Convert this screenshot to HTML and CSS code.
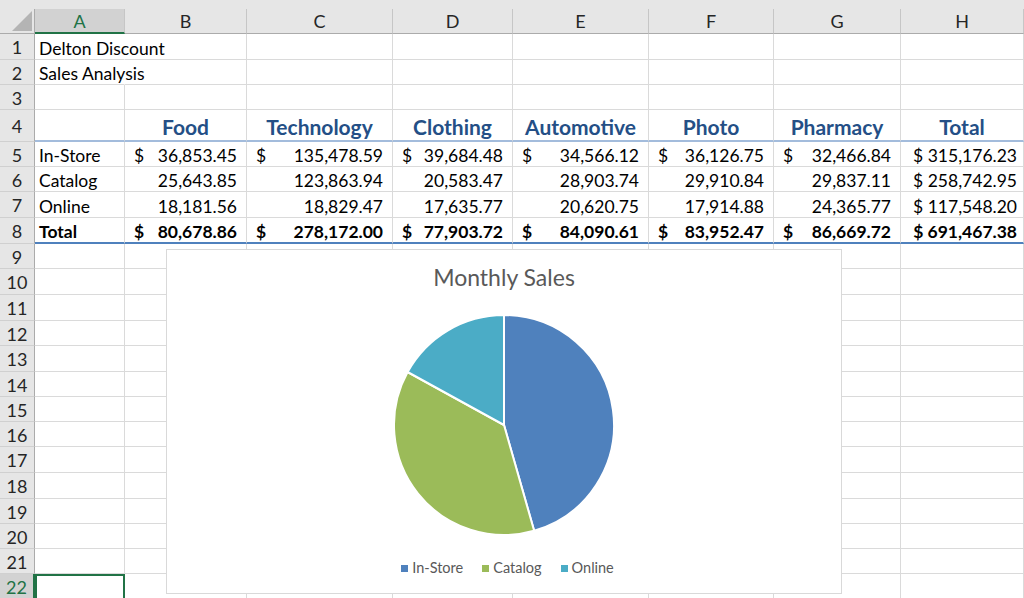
FILE: index.html
```html
<!DOCTYPE html>
<html>
<head>
<meta charset="utf-8">
<link rel="stylesheet" href="styles.css">
</head>
<body>
<div class="sheet">
  <div class="hdr">
    <div class="corner"><i></i></div>
    <div class="ch sel">A</div>
    <div class="ch">B</div>
    <div class="ch">C</div>
    <div class="ch">D</div>
    <div class="ch">E</div>
    <div class="ch">F</div>
    <div class="ch">G</div>
    <div class="ch">H</div>
  </div>

  <div class="row h26"><div class="rh">1</div><div class="c txt nob">Delton Discount</div><div class="c"></div><div class="c"></div><div class="c"></div><div class="c"></div><div class="c"></div><div class="c"></div><div class="c"></div></div>
  <div class="row h25"><div class="rh">2</div><div class="c txt nob">Sales Analysis</div><div class="c"></div><div class="c"></div><div class="c"></div><div class="c"></div><div class="c"></div><div class="c"></div><div class="c"></div></div>
  <div class="row h25"><div class="rh">3</div><div class="c"></div><div class="c"></div><div class="c"></div><div class="c"></div><div class="c"></div><div class="c"></div><div class="c"></div><div class="c"></div></div>
  <div class="row h32 r4"><div class="rh">4</div><div class="c"></div><div class="c hd">Food</div><div class="c hd">Technology</div><div class="c hd">Clothing</div><div class="c hd">Automotive</div><div class="c hd">Photo</div><div class="c hd">Pharmacy</div><div class="c hd">Total</div></div>
  <div class="row h25"><div class="rh">5</div><div class="c txt">In-Store</div><div class="c acc"><span>$</span><span>36,853.45</span></div><div class="c acc"><span>$</span><span>135,478.59</span></div><div class="c acc"><span>$</span><span>39,684.48</span></div><div class="c acc"><span>$</span><span>34,566.12</span></div><div class="c acc"><span>$</span><span>36,126.75</span></div><div class="c acc"><span>$</span><span>32,466.84</span></div><div class="c tot">$ 315,176.23</div></div>
  <div class="row h25"><div class="rh">6</div><div class="c txt">Catalog</div><div class="c num">25,643.85</div><div class="c num">123,863.94</div><div class="c num">20,583.47</div><div class="c num">28,903.74</div><div class="c num">29,910.84</div><div class="c num">29,837.11</div><div class="c tot">$ 258,742.95</div></div>
  <div class="row h26"><div class="rh">7</div><div class="c txt">Online</div><div class="c num">18,181.56</div><div class="c num">18,829.47</div><div class="c num">17,635.77</div><div class="c num">20,620.75</div><div class="c num">17,914.88</div><div class="c num">24,365.77</div><div class="c tot">$ 117,548.20</div></div>
  <div class="row h26 r8"><div class="rh">8</div><div class="c txt">Total</div><div class="c acc"><span>$</span><span>80,678.86</span></div><div class="c acc"><span>$</span><span>278,172.00</span></div><div class="c acc"><span>$</span><span>77,903.72</span></div><div class="c acc"><span>$</span><span>84,090.61</span></div><div class="c acc"><span>$</span><span>83,952.47</span></div><div class="c acc"><span>$</span><span>86,669.72</span></div><div class="c tot">$ 691,467.38</div></div>
  <div class="row h25"><div class="rh">9</div><div class="c"></div><div class="c"></div><div class="c"></div><div class="c"></div><div class="c"></div><div class="c"></div><div class="c"></div><div class="c"></div></div>
  <div class="row h26"><div class="rh">10</div><div class="c"></div><div class="c"></div><div class="c"></div><div class="c"></div><div class="c"></div><div class="c"></div><div class="c"></div><div class="c"></div></div>
  <div class="row h26"><div class="rh">11</div><div class="c"></div><div class="c"></div><div class="c"></div><div class="c"></div><div class="c"></div><div class="c"></div><div class="c"></div><div class="c"></div></div>
  <div class="row h25"><div class="rh">12</div><div class="c"></div><div class="c"></div><div class="c"></div><div class="c"></div><div class="c"></div><div class="c"></div><div class="c"></div><div class="c"></div></div>
  <div class="row h26"><div class="rh">13</div><div class="c"></div><div class="c"></div><div class="c"></div><div class="c"></div><div class="c"></div><div class="c"></div><div class="c"></div><div class="c"></div></div>
  <div class="row h25"><div class="rh">14</div><div class="c"></div><div class="c"></div><div class="c"></div><div class="c"></div><div class="c"></div><div class="c"></div><div class="c"></div><div class="c"></div></div>
  <div class="row h25"><div class="rh">15</div><div class="c"></div><div class="c"></div><div class="c"></div><div class="c"></div><div class="c"></div><div class="c"></div><div class="c"></div><div class="c"></div></div>
  <div class="row h25"><div class="rh">16</div><div class="c"></div><div class="c"></div><div class="c"></div><div class="c"></div><div class="c"></div><div class="c"></div><div class="c"></div><div class="c"></div></div>
  <div class="row h26"><div class="rh">17</div><div class="c"></div><div class="c"></div><div class="c"></div><div class="c"></div><div class="c"></div><div class="c"></div><div class="c"></div><div class="c"></div></div>
  <div class="row h26"><div class="rh">18</div><div class="c"></div><div class="c"></div><div class="c"></div><div class="c"></div><div class="c"></div><div class="c"></div><div class="c"></div><div class="c"></div></div>
  <div class="row h25"><div class="rh">19</div><div class="c"></div><div class="c"></div><div class="c"></div><div class="c"></div><div class="c"></div><div class="c"></div><div class="c"></div><div class="c"></div></div>
  <div class="row h25"><div class="rh">20</div><div class="c"></div><div class="c"></div><div class="c"></div><div class="c"></div><div class="c"></div><div class="c"></div><div class="c"></div><div class="c"></div></div>
  <div class="row h25"><div class="rh">21</div><div class="c"></div><div class="c"></div><div class="c"></div><div class="c"></div><div class="c"></div><div class="c"></div><div class="c"></div><div class="c"></div></div>
  <div class="row h26"><div class="rh rsel">22</div><div class="c csel"></div><div class="c"></div><div class="c"></div><div class="c"></div><div class="c"></div><div class="c"></div><div class="c"></div><div class="c"></div></div>

  <div class="chart">
    <div class="title">Monthly Sales</div>
    <svg class="pie" viewBox="0 0 222 222" width="222" height="222">
      <path d="M111,111 L111,1 A110,110 0 0 1 141.15,216.79 Z" fill="#4f81bd" stroke="#fff" stroke-width="2" stroke-linejoin="round"/>
      <path d="M111,111 L141.15,216.79 A110,110 0 0 1 14.61,58.0 Z" fill="#9bbb59" stroke="#fff" stroke-width="2" stroke-linejoin="round"/>
      <path d="M111,111 L14.61,58.0 A110,110 0 0 1 111,1 Z" fill="#4bacc6" stroke="#fff" stroke-width="2" stroke-linejoin="round"/>
    </svg>
    <div class="legend">
      <div class="li"><span class="sw s1"></span>In-Store</div>
      <div class="li"><span class="sw s2"></span>Catalog</div>
      <div class="li"><span class="sw s3"></span>Online</div>
    </div>
  </div>
</div>
</body>
</html>
```

FILE: styles.css
```css
* { box-sizing: border-box; }
html, body { margin: 0; padding: 0; background: #fff; }
body { overflow: hidden; font-family: Lato, "Noto Sans", sans-serif; }

.sheet { position: relative; width: 1024px; height: 598px; overflow: hidden; }

.hdr, .row {
  display: grid;
  grid-template-columns: 35px 90px 122px 146px 120px 136px 125px 127px 123px;
}
.hdr { height: 34px; padding-top: 9px; background: #e6e6e6; }
.h24 { height: 24px; }
.h25 { height: 25px; }
.h26 { height: 26px; }
.h32 { height: 32px; }

.corner {
  border-right: 1px solid #ababab;
  border-bottom: 1px solid #ababab;
  display: flex;
  align-items: flex-end;
  justify-content: flex-end;
  padding: 0 2px 2px 0;
}
.corner i {
  display: block;
  width: 20px;
  height: 20px;
  background: #b4b4b4;
  clip-path: polygon(100% 0, 100% 100%, 0 100%);
}
.ch {
  display: flex;
  align-items: center;
  justify-content: center;
  border-right: 1px solid #c6c6c6;
  border-bottom: 1px solid #ababab;
  font-size: 18px;
  color: #262626;
}
.ch.sel {
  background: #d2d2d2;
  color: #217346;
  border-bottom: 2px solid #217346;
}

.rh {
  background: #e6e6e6;
  border-right: 1px solid #ababab;
  border-bottom: 1px solid #d0d0d0;
  display: flex;
  align-items: center;
  justify-content: center;
  padding-top: 1px;
  font-size: 18px;
  color: #262626;
}
.rh.rsel { background: #d2d2d2; color: #217346; border-right: 2px solid #217346; }

.c {
  border-right: 1px solid #dadada;
  border-bottom: 1px solid #dadada;
  display: flex;
  align-items: flex-end;
  padding-bottom: 0;
  font-size: 17.5px;
  line-height: 20px;
  white-space: nowrap;
  color: #000;
  min-width: 0;
}
.c.nob { border-right-color: transparent; }
.c.txt { padding-left: 4px; }
.c.acc { justify-content: space-between; padding-left: 9px; padding-right: 9px; }
.c.num { justify-content: flex-end; padding-right: 9px; }
.c.tot { justify-content: flex-end; padding-right: 6px; }
.c.csel { border: 2px solid #217346; border-bottom: none; }

.r4 .c { border-bottom: 2px solid #a3bcdc; }
.c.hd {
  justify-content: center;
  font-weight: 700;
  font-size: 21px;
  line-height: 24px;
  padding-bottom: 1px;
  color: #244f86;
}
.r8 .c { border-bottom: 2px solid #4f81bd; font-weight: 700; }

.chart {
  position: absolute;
  left: 166px;
  top: 249px;
  width: 676px;
  height: 345px;
  border: 1px solid #d9d9d9;
  background: #fff;
  display: flex;
  flex-direction: column;
  align-items: center;
  padding-top: 13px;
}
.title { font-size: 23px; line-height: 28px; color: #595959; }
.pie { display: block; margin-top: 23px; width: 222px; height: 222px; }
.legend {
  margin-top: 22px;
  padding-left: 7px;
  display: flex;
  gap: 19px;
  font-size: 14.5px;
  line-height: 20px;
  color: #595959;
}
.li { display: flex; align-items: center; gap: 4px; }
.sw { display: block; width: 7px; height: 7px; }
.s1 { background: #4f81bd; }
.s2 { background: #9bbb59; }
.s3 { background: #4bacc6; }
```
